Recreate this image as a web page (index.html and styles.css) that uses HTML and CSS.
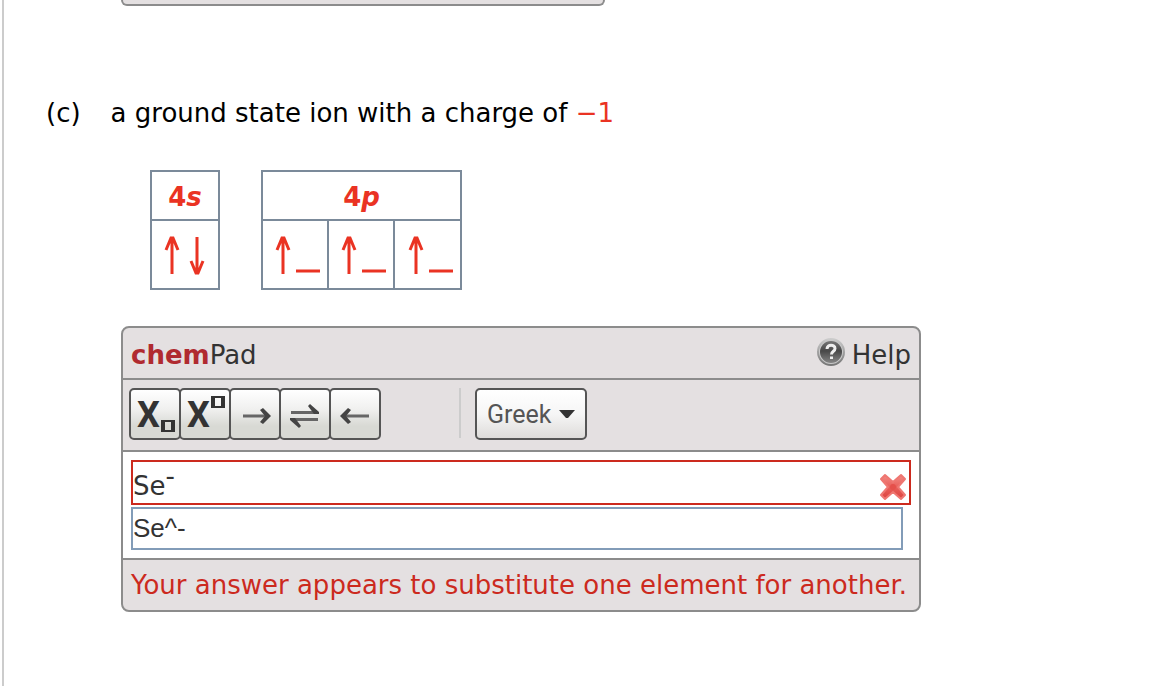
FILE: index.html
```html
<!DOCTYPE html>
<html lang="en">
<head>
    <meta charset="UTF-8">
    <meta name="viewport" content="width=device-width, initial-scale=1.0">
    <title>chemPad</title>
    <link rel="stylesheet" href="styles.css">
</head>
<body>
    <main class="question">
        <div class="previous-pad"></div>

        <p class="part">
            <span class="part-label">(c)</span>
            <span>a ground state ion with a charge of <span class="value">−1</span></span>
        </p>

        <div class="orbitals">
            <table class="orbital">
                <tr><th>4<i>s</i></th></tr>
                <tr>
                    <td>
                        <svg class="spin" viewBox="0 0 66 67" role="img" aria-label="up down"><path d="M20 53V18M14 29L19 17H21L26 29M45 16V51M39 40L44 52H46L51 40"/></svg>
                    </td>
                </tr>
            </table>
            <table class="orbital">
                <tr><th colspan="3">4<i>p</i></th></tr>
                <tr>
                    <td>
                        <svg class="spin" viewBox="0 0 64 67" role="img" aria-label="up"><path d="M20 53V18M14 29L19 17H21L26 29M33 50H57"/></svg>
                    </td>
                    <td>
                        <svg class="spin" viewBox="0 0 64 67" role="img" aria-label="up"><path d="M20 53V18M14 29L19 17H21L26 29M33 50H57"/></svg>
                    </td>
                    <td>
                        <svg class="spin" viewBox="0 0 65 67" role="img" aria-label="up"><path d="M21 53V18M15 29L20 17H22L27 29M34 50H58"/></svg>
                    </td>
                </tr>
            </table>
        </div>

        <section class="pad">
            <header class="pad-header">
                <span class="pad-title"><b>chem</b>Pad</span>
                <a href="#" class="help">
                    <svg class="help-icon" viewBox="0 0 30 30" aria-hidden="true">
                        <defs>
                            <linearGradient id="ball" x1="0" y1="0" x2="0" y2="1">
                                <stop offset="0" stop-color="#777"/>
                                <stop offset=".45" stop-color="#484848"/>
                                <stop offset="1" stop-color="#858585"/>
                            </linearGradient>
                            <linearGradient id="rim" x1="0" y1="0" x2="0" y2="1">
                                <stop offset="0" stop-color="#ccc"/>
                                <stop offset="1" stop-color="#777"/>
                            </linearGradient>
                        </defs>
                        <circle cx="15" cy="15" r="13" fill="#c9c9c9" stroke="url(#rim)" stroke-width="2"/>
                        <circle cx="15" cy="15" r="11" fill="url(#ball)"/>
                        <path d="M11 12C11 7 19 7 19 11.500C19 14.500 15.500 14 15.500 17.500" fill="none" stroke="#eee" stroke-width="3"/>
                        <path d="M14 19.500H17V22H14Z" fill="#eee"/>
                    </svg>
                    Help
                </a>
            </header>

            <div class="toolbar">
                <div class="tools">
                    <button type="button" class="tool" aria-label="Subscript">
                        <svg viewBox="0 0 48 48"><text class="tool-x" x="6" y="37">X</text><path class="box" d="M30 30H44V42H30ZM34 32V40H40V32Z"/></svg>
                    </button>
                    <button type="button" class="tool" aria-label="Superscript">
                        <svg viewBox="0 0 48 48"><text class="tool-x" x="6" y="37">X</text><path class="box" d="M30 6H44V18H30ZM34 8V16H40V8Z"/></svg>
                    </button>
                    <button type="button" class="tool" aria-label="Right arrow">
                        <svg viewBox="0 0 48 48"><path class="shaft" d="M12 26H37"/><path class="head" d="M32 18L40 26L32 34L29 32L34 26L29 20Z"/></svg>
                    </button>
                    <button type="button" class="tool" aria-label="Equilibrium arrow">
                        <svg viewBox="0 0 48 48"><path class="shaft" d="M10 22.500H35M12 29.500H37"/><path class="head" d="M29 14L38 22V24H33L27 16ZM18 38L9 30V28H14L20 36Z"/></svg>
                    </button>
                    <button type="button" class="tool" aria-label="Left arrow">
                        <svg viewBox="0 0 48 48"><path class="shaft" d="M12 26H38"/><path class="head" d="M17 18L9 26L17 34L20 32L15 26L20 20Z"/></svg>
                    </button>
                </div>
                <div class="greek">
                    <select class="greek-select" aria-label="Greek">
                        <option>Greek</option>
                    </select>
                    <svg class="caret" viewBox="0 0 16 8" aria-hidden="true"><path d="M0 0H16L9 8H7Z"/></svg>
                </div>
            </div>

            <div class="answer">
                <div class="preview">
                    <span>Se<sup>-</sup></span>
                    <svg class="wrong" viewBox="0 0 28 28" role="img" aria-label="Incorrect">
                        <defs>
                            <linearGradient id="cross" x1="0" y1="0" x2="0" y2="1">
                                <stop offset="0" stop-color="#f28a84"/>
                                <stop offset=".5" stop-color="#e9605b"/>
                                <stop offset="1" stop-color="#dc423d"/>
                            </linearGradient>
                        </defs>
                        <path d="M6 2L14 9L22 2L26 6L19 14L26 22L22 26L14 19L6 26L2 22L9 14L2 6Z" fill="url(#cross)" stroke="#ef7772" stroke-width="2" stroke-linejoin="round"/>
                        <circle cx="14" cy="14" r="3" fill="#e5504b"/>
                    </svg>
                </div>
                <input type="text" class="entry" value="Se^-" aria-label="Answer">
            </div>

            <p class="message">Your answer appears to substitute one element for another.</p>
        </section>
    </main>
</body>
</html>
```

FILE: styles.css
```css
* {
    box-sizing: border-box;
}

body {
    margin: 0;
    background-color: #fff;
    color: #000;
    font-family: Verdana, "DejaVu Sans", sans-serif;
    font-size: 26px;
    line-height: 32px;
}

.question {
    min-height: 100vh;
    margin-left: 2px;
    padding-left: 42px;
    border-left: 2px solid #ccc;
}

.previous-pad {
    max-width: 484px;
    height: 6px;
    margin-left: 75px;
    background-color: #e4e0e1;
    border: 2px solid #8c8c8c;
    border-top: none;
    border-radius: 0 0 8px 8px;
}

.part {
    display: flex;
    gap: 30px;
    margin: 91px 0 0;
}

.value {
    color: #ea3323;
}

/* orbital diagram */
.orbitals {
    display: flex;
    gap: 41px;
    margin: 41px 0 36px 104px;
}

.orbital {
    border-collapse: collapse;
    color: #ea3323;
}

.orbital th,
.orbital td {
    padding: 0;
    border: 2px solid #7b8a9a;
}

.orbital th {
    height: 49px;
    padding-top: 2px;
}

.spin {
    display: block;
    height: 67px;
    fill: none;
    stroke: #ea3323;
    stroke-width: 3;
}

/* chemPad */
.pad {
    max-width: 800px;
    margin-left: 75px;
    background-color: #e4e0e1;
    border: 2px solid #8c8c8c;
    border-radius: 8px;
    color: #333;
    overflow: hidden;
}

.pad-header {
    display: flex;
    justify-content: space-between;
    padding: 11px 8px 7px;
    border-bottom: 2px solid #8c8c8c;
}

.pad-title b {
    color: #b02a30;
}

.help {
    display: flex;
    gap: 6px;
    color: #333;
    text-decoration: none;
}

.help-icon {
    width: 30px;
    height: 30px;
    margin-top: -2px;
}

.toolbar {
    display: flex;
    gap: 78px;
    padding: 8px 6px 10px;
    border-bottom: 2px solid #8c8c8c;
}

.tools {
    display: flex;
}

.tool,
.greek-select {
    height: 52px;
    border: 2px solid #555;
    border-radius: 5px;
    background: linear-gradient(#fff, #f0f0ef 40%, #d8d9d4 75%);
}

.tool {
    width: 52px;
    padding: 0;
}

.tool + .tool {
    margin-left: -2px;
}

.tool svg {
    display: block;
    width: 48px;
    height: 48px;
    fill: none;
}

.tool-x {
    fill: #333;
    font-family: Roboto, sans-serif;
    font-size: 36px;
    font-weight: bold;
}

.box {
    fill: #333;
    fill-rule: evenodd;
}

.shaft {
    stroke: #666;
    stroke-width: 3;
}

.head {
    fill: #444;
}

.greek {
    position: relative;
    padding-left: 16px;
    background: linear-gradient(#ccc, #ccc) no-repeat 0 0 / 2px 50px;
}

.greek-select {
    display: block;
    width: 112px;
    padding: 0 10px;
    appearance: none;
    background: linear-gradient(#fff, #f6f6f6 50%, #dedcda);
    color: #555;
    font-family: Roboto, sans-serif;
    font-size: 25px;
}

.caret {
    position: absolute;
    top: 22px;
    right: 12px;
    width: 16px;
    height: 8px;
    fill: #333;
    pointer-events: none;
}

.answer {
    padding: 8px;
    background-color: #fff;
}

.preview {
    display: flex;
    justify-content: space-between;
    height: 45px;
    padding: 8px 2px 0 0;
    border: 2px solid #cc2a1e;
}

.preview sup {
    font-size: 26px;
    line-height: 0;
}

.wrong {
    width: 28px;
    height: 28px;
    margin-top: 3px;
}

.entry {
    display: block;
    width: calc(100% - 8px);
    height: 43px;
    margin-top: 2px;
    padding: 0;
    border: 2px solid #829cb8;
    color: #333;
    font-family: Arial, "Liberation Sans", sans-serif;
    font-size: 26px;
}

.message {
    margin: 0;
    padding: 9px 8px;
    border-top: 2px solid #8c8c8c;
    color: #cc2a1e;
}
```
